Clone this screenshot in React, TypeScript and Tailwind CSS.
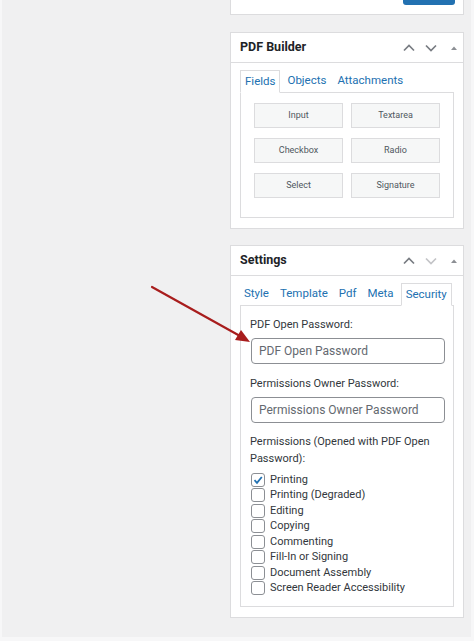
import { ReactNode } from "react"

const font = { fontFamily: "Roboto, 'Liberation Sans', sans-serif" }

function Chevron({ up, light }: { up?: boolean; light?: boolean }) {
  return (
    <svg width="14" height="14" viewBox="0 0 14 14" className={light ? "text-[#c3c4c7]" : "text-[#787c82]"}>
      <path d={up ? "M2 9.5 L7 4.5 L12 9.5" : "M2 4.5 L7 9.5 L12 4.5"} fill="none" stroke="currentColor" strokeWidth="1.7" />
    </svg>
  )
}

function PanelHeader({ title, downLight }: { title: string; downLight?: boolean }) {
  return (
    <div className="flex items-center h-[30px] border-b border-[#dcdcde] pl-[9px] pr-[3px]">
      <h2 className="text-[12.5px] font-bold text-[#1d2327]">{title}</h2>
      <div className="ml-auto flex items-center gap-[8px]">
        <Chevron up />
        <Chevron light={downLight} />
        <svg width="12" height="12" viewBox="0 0 12 12" className="ml-[2px] text-[#8c8f94]">
          <path d="M3 8 L6 4.5 L9 8 Z" fill="currentColor" />
        </svg>
      </div>
    </div>
  )
}

function Tabs({ items, active }: { items: string[]; active: string }) {
  return (
    <div className="flex items-end gap-[3px] h-[22px]">
      {items.map((t) => (
        <div
          key={t}
          className={
            t === active
              ? "px-[4px] h-[23px] -mb-px flex items-center bg-white border border-[#dcdcde] border-b-white text-[#2271b1] text-[11.5px] relative z-10"
              : "px-[4px] h-[22px] flex items-center text-[#2271b1] text-[11.5px]"
          }
        >
          {t}
        </div>
      ))}
    </div>
  )
}

function Panel({ children, className }: { children: ReactNode; className?: string }) {
  return <div className={`bg-white border border-[#dcdcde] ${className ?? ""}`}>{children}</div>
}

const fieldButtons = ["Input", "Textarea", "Checkbox", "Radio", "Select", "Signature"]

const permissions = [
  "Printing",
  "Printing (Degraded)",
  "Editing",
  "Copying",
  "Commenting",
  "Fill-In or Signing",
  "Document Assembly",
  "Screen Reader Accessibility",
]

export default function App() {
  return (
    <div style={font} className="w-[474px] h-[641px] bg-[#f7f7f8] overflow-hidden">
      <div className="relative w-[469px] h-[637px] ml-[2px] bg-[#f0f0f1]">
        <div className="flex flex-col w-[234px] ml-[228px]">
          {/* top panel, cut off */}
          <Panel className="border-t-0 h-[15px] flex justify-end pr-[8px]">
            <div className="w-[52px] h-[5px] bg-[#2271b1] rounded-b-[3px]" />
          </Panel>

          <Panel className="mt-[17px]">
            <PanelHeader title="PDF Builder" />
            <div className="px-[9px] pt-[7px] pb-[10px]">
              <Tabs items={["Fields", "Objects", "Attachments"]} active="Fields" />
              <div className="border border-[#dcdcde] pt-[10px] pb-[19px] px-[13px]">
                <div className="grid grid-cols-2 gap-x-[8px] gap-y-[10px]">
                  {fieldButtons.map((b) => (
                    <div
                      key={b}
                      className="h-[25px] flex items-center justify-center bg-[#f6f7f7] border border-[#dcdcde] text-[9px] text-[#50575e]"
                    >
                      {b}
                    </div>
                  ))}
                </div>
              </div>
            </div>
          </Panel>

          <Panel className="mt-[16px]">
            <PanelHeader title="Settings" downLight />
            <div className="px-[9px] pt-[7px] pb-[10px]">
              <Tabs items={["Style", "Template", "Pdf", "Meta", "Security"]} active="Security" />
              <div className="border border-[#dcdcde] pt-[10px] pb-[10px] pl-[9px] pr-[8px] text-[11px] text-[#32373c]">
                <div className="leading-[17px]">PDF Open Password:</div>
                <div className="mt-[5px] ml-[1px] h-[26px] border border-[#8c8f94] rounded-[4px] flex items-center px-[7px] text-[12px] text-[#646970]">
                  PDF Open Password
                </div>
                <div className="mt-[11px] leading-[17px]">Permissions Owner Password:</div>
                <div className="mt-[5px] ml-[1px] h-[26px] border border-[#8c8f94] rounded-[4px] flex items-center px-[7px] text-[12px] text-[#646970]">
                  Permissions Owner Password
                </div>
                <div className="mt-[10px] leading-[17px]">
                  Permissions (Opened with PDF Open
                  <br />
                  Password):
                </div>
                <div className="mt-[5px] flex flex-col">
                  {permissions.map((p, i) => (
                    <div key={p} className="flex items-center h-[15.5px] ml-[1px]">
                      <div className="w-[14px] h-[14px] border border-[#8c8f94] rounded-[3px] bg-white flex items-center justify-center">
                        {i === 0 && (
                          <svg width="12" height="12" viewBox="0 0 12 12">
                            <path d="M2.5 6.2 L5 8.8 L9.8 3" fill="none" stroke="#2271b1" strokeWidth="1.8" />
                          </svg>
                        )}
                      </div>
                      <span className="ml-[5px] text-[11px] text-[#32373c]">{p}</span>
                    </div>
                  ))}
                </div>
              </div>
            </div>
          </Panel>
        </div>

        {/* annotation arrow */}
        <svg className="absolute left-0 top-0 pointer-events-none" width="469" height="637">
          <line x1="150" y1="287" x2="238" y2="336" stroke="#a81d1d" strokeWidth="2.2" strokeLinecap="round" />
          <path d="M248 342 L233 340 L239 330 Z" fill="#a81d1d" />
        </svg>
      </div>
    </div>
  )
}
